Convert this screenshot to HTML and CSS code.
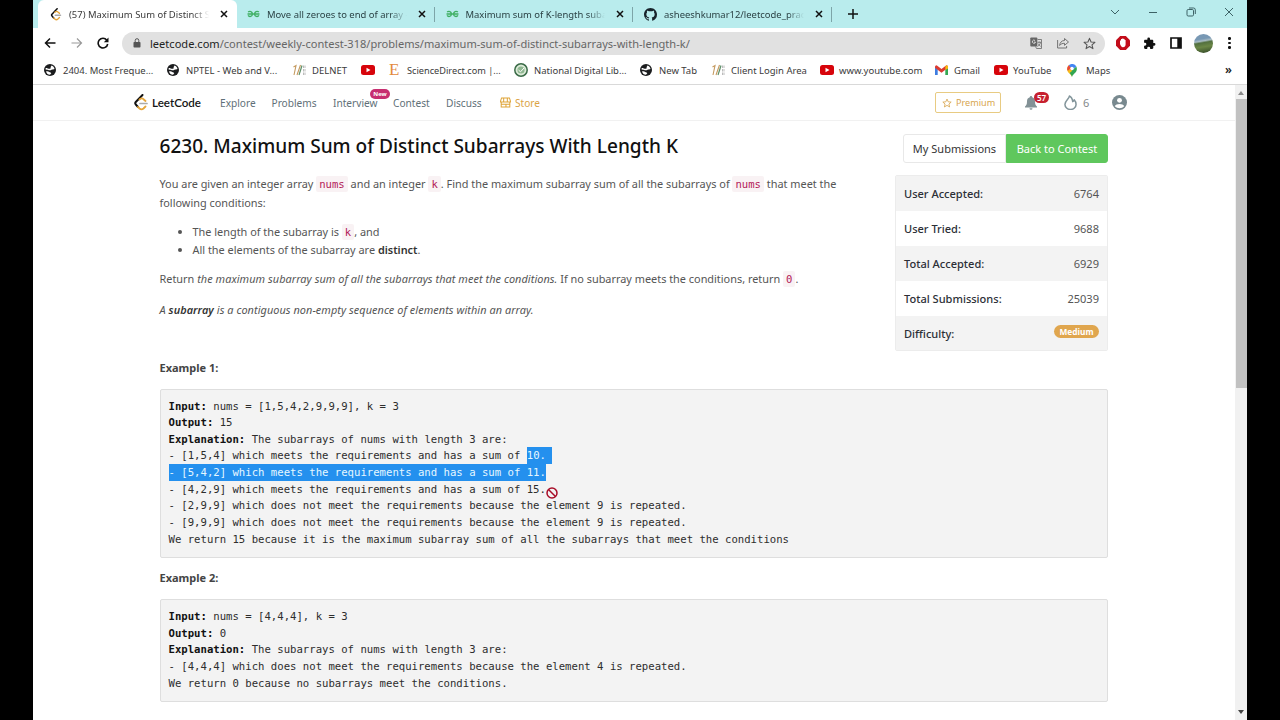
FILE: index.html
```html
<!DOCTYPE html>
<html lang="en">
<head>
<meta charset="utf-8">
<title>Maximum Sum of Distinct Subarrays With Length K</title>
<link rel="stylesheet" href="styles.css">
</head>
<body>
<svg class="defs" width="0" height="0">
  <symbol id="globe" viewBox="0 0 24 24"><circle cx="12" cy="12" r="12" fill="#1b1c1e"/><path d="M3.500 8c3 0 5 1.500 8 1.500 2 0 2.500-1.500 1.500-3l2-3.500c3 1 5.500 3.500 6 7-2 1.500-4 0-6 1.500-1.500 1-4 1.500-6.500.5C6 11 4.500 11.500 3 11z" fill="#fff"/><path d="M4 15c3-1 5 0 6.500 1s3.500.5 4 2.500L12 21.500C8 21.500 5 19 4 15z" fill="#fff"/></symbol>
  <symbol id="delnet" viewBox="0 0 26 24"><path d="M1 6l5-3-4 19M8 22L15 2" fill="none" stroke="#c59a5f" stroke-width="2.200"/><path d="M12 22l6-19" fill="none" stroke="#5d8f69" stroke-width="2.400"/><path d="M21 3v5M21 10v5M21 17v5M24 3v5M24 10v5M24 17v5" stroke="#aaa" stroke-width="1.600"/></symbol>
  <symbol id="yt" viewBox="0 0 28 20"><rect width="28" height="20" rx="5" fill="#d7040b"/><path d="M11 5.500v9l8-4.500z" fill="#fff"/></symbol>
  <symbol id="gfg" viewBox="0 0 24 14"><path d="M2 3.500C5 1 10 2 10 7s-6 6-8 2.500M1 7h22M22 3.500C19 1 14 2 14 7s6 6 8 2.500" fill="none" stroke="#3faf63" stroke-width="2.400"/></symbol>
  <symbol id="lc" viewBox="0 0 28 34"><path d="M17 2L4 15.500q-3 3 0 6l4 4.500" fill="none" stroke="#111" stroke-width="4" stroke-linecap="round"/><path d="M8 26l3 3q4 3.500 8 0l4-4M11 11q5-4 8-.5l4 3.500" fill="none" stroke="#e5a53a" stroke-width="3.600" stroke-linecap="round"/><path d="M12 19h14" stroke="#aaa" stroke-width="3.400" stroke-linecap="round"/></symbol>
  <symbol id="x" viewBox="0 0 8 8"><path d="M1 1l6 6M7 1L1 7" stroke="#111" stroke-width="1.500"/></symbol>
  <symbol id="star" viewBox="0 0 24 24"><path d="M12 2.500l2.900 6.700 7.100.6-5.400 4.700 1.700 7L12 17.700 5.700 21.500l1.700-7L2 9.800l7.100-.6z" fill="none" stroke="currentColor" stroke-width="2" stroke-linejoin="round"/></symbol>
</svg>
<div class="window">
  <div class="tabs">
    <div class="tab active"><svg class="fav lcfav"><use href="#lc"/></svg><span class="tab-title">(57) Maximum Sum of Distinct Su</span><svg class="close"><use href="#x"/></svg></div>
    <div class="tab"><svg class="fav"><use href="#gfg"/></svg><span class="tab-title">Move all zeroes to end of array - G</span><svg class="close"><use href="#x"/></svg></div>
    <div class="tab"><svg class="fav"><use href="#gfg"/></svg><span class="tab-title">Maximum sum of K-length subarray</span><svg class="close"><use href="#x"/></svg></div>
    <div class="tab"><svg class="fav gh" viewBox="0 0 16 16"><path fill="#17232b" d="M8 0C3.580 0 0 3.580 0 8c0 3.540 2.290 6.530 5.470 7.590.4.070.55-.17.55-.38 0-.19-.01-.82-.01-1.490-2.010.37-2.530-.49-2.690-.94-.09-.23-.48-.94-.82-1.130-.28-.15-.68-.52-.01-.53.63-.01 1.080.58 1.230.82.72 1.210 1.870.87 2.330.66.07-.52.28-.87.51-1.070-1.780-.2-3.640-.89-3.640-3.950 0-.87.31-1.590.82-2.150-.08-.2-.36-1.020.08-2.120 0 0 .67-.21 2.200.82.64-.18 1.320-.27 2-.27s1.360.09 2 .27c1.530-1.040 2.200-.82 2.200-.82.44 1.100.16 1.920.08 2.120.51.56.82 1.270.82 2.150 0 3.070-1.870 3.750-3.650 3.950.29.25.54.73.54 1.480 0 1.070-.01 1.930-.01 2.200 0 .21.15.46.55.38A8 8 0 0 0 16 8c0-4.420-3.580-8-8-8z"/></svg><span class="tab-title">asheeshkumar12/leetcode_practice</span><svg class="close"><use href="#x"/></svg></div>
    <svg class="newtab" viewBox="0 0 10 10"><path d="M5 0v10M0 5h10" stroke="#111" stroke-width="1.500"/></svg>
    <div class="controls">
      <svg width="10" height="10" viewBox="0 0 10 10"><path d="M1 3l4 4 4-4"/></svg>
      <svg width="10" height="10" viewBox="0 0 10 10"><path d="M1 5.500h8"/></svg>
      <svg width="10" height="10" viewBox="0 0 10 10"><rect x="1" y="2.500" width="6.500" height="6.500" rx="1.200"/><path d="M3 1h4.500Q9.300 1 9.300 2.800V7"/></svg>
      <svg width="10" height="10" viewBox="0 0 10 10"><path d="M1 1l8 8M9 1L1 9"/></svg>
    </div>
  </div>

  <div class="toolbar">
    <svg class="tb back" viewBox="0 0 12 12"><path d="M11.500 6H1.500M6 1.500L1.500 6 6 10.500" fill="none" stroke="#111" stroke-width="1.500"/></svg>
    <svg class="tb fwd" viewBox="0 0 12 12"><path d="M.5 6h10M6 1.500L10.500 6 6 10.500" fill="none" stroke="#999" stroke-width="1.200"/></svg>
    <svg class="tb reload" viewBox="0 0 12 12"><path d="M9.800 3.200A4.800 4.800 0 1 0 10.700 7" fill="none" stroke="#111" stroke-width="1.600"/><path d="M11.500.5v4.700H6.800z" fill="#111"/></svg>
    <div class="omnibox">
      <svg class="lock" viewBox="0 0 8 10"><rect x=".5" y="4" width="7" height="5.500" rx=".8" fill="#555"/><path d="M2.200 4V2.500a1.800 1.800 0 0 1 3.600 0V4" fill="none" stroke="#555"/></svg>
      <span class="url"><b>leetcode.com</b>/contest/weekly-contest-318/problems/maximum-sum-of-distinct-subarrays-with-length-k/</span>
      <svg class="om" viewBox="0 0 12 12"><rect x=".3" y=".5" width="7" height="9" rx=".8" fill="#666"/><path d="M5 3.500a1.600 1.600 0 1 0 .5 1.600H4" fill="none" stroke="#e1e1e1" stroke-width=".9"/><path d="M7.500 2.500h4v9H6.500l-1-2M7.500 5.300h3.500M9.200 4.500v.8M10.500 5.500c-.5 2-1.500 3-3 4M8 6.500l2.500 3" fill="none" stroke="#666" stroke-width=".8"/></svg>
      <svg class="om" viewBox="0 0 12 12"><path d="M.6 3v8h9V9M7.500 1.500v2C4.500 3.600 3 5.500 2.600 8.500 4 6.800 5.500 6.300 7.500 6.300v2L11.500 5z" fill="none" stroke="#666" stroke-width=".9" stroke-linejoin="round"/></svg>
      <svg class="om st"><use href="#star"/></svg>
    </div>
    <svg class="ext adb" viewBox="0 0 14 14"><path d="M4.200 0h5.600L14 4.200v5.600L9.800 14H4.200L0 9.800V4.200z" fill="#c30d1b"/><path d="M4 7V4.500h1V3h1.200v-.5h1.200V3h1.200v1h1v4.500c0 1.500-1 2.700-2.700 2.700C5.500 11.200 4.700 9.500 4 8z" fill="#fff"/></svg>
    <svg class="ext puz" viewBox="0 0 24 24"><path fill="#111" d="M20.500 11H19V7c0-1.100-.9-2-2-2h-4V3.500a2.500 2.500 0 0 0-5 0V5H4c-1.100 0-2 .9-2 2v3.800h1.500a2.700 2.700 0 0 1 0 5.400H2V20c0 1.100.9 2 2 2h3.800v-1.500a2.700 2.700 0 0 1 5.400 0V22H17c1.100 0 2-.9 2-2v-4h1.500a2.500 2.500 0 0 0 0-5z"/></svg>
    <svg class="ext side" viewBox="0 0 12 12"><path d="M1 1h10v10H1z" fill="none" stroke="#111" stroke-width="1.700"/><path d="M7.300 1H11v10H7.300z" fill="#111"/></svg>
    <div class="avatar"></div>
    <div class="dots"><i></i><i></i><i></i></div>
  </div>

  <div class="bookmarks">
    <div class="bm b1"><svg><use href="#globe"/></svg>2404. Most Freque...</div>
    <div class="bm b2"><svg><use href="#globe"/></svg>NPTEL - Web and V...</div>
    <div class="bm b3"><svg class="dn"><use href="#delnet"/></svg>DELNET</div>
    <div class="bm b4"><svg class="ytb"><use href="#yt"/></svg></div>
    <div class="bm b5"><span class="els">E</span>ScienceDirect.com |...</div>
    <div class="bm b6"><svg class="ndl" viewBox="0 0 14 14"><circle cx="7" cy="7" r="6.200" fill="#dcebd8" stroke="#3a6b47" stroke-width="1.500"/><circle cx="7" cy="7" r="3.600" fill="#8fb791"/><path d="M4.500 7l2 1.800L10 5" fill="none" stroke="#fff"/></svg>National Digital Lib...</div>
    <div class="bm b7"><svg><use href="#globe"/></svg>New Tab</div>
    <div class="bm b8"><svg class="dn"><use href="#delnet"/></svg>Client Login Area</div>
    <div class="bm b9"><svg class="ytb"><use href="#yt"/></svg>www.youtube.com</div>
    <div class="bm b10"><svg class="gm" viewBox="0 0 24 18"><path d="M0 3v15h5V7z" fill="#3f7de0"/><path d="M24 3v15h-5V7z" fill="#34a853"/><path d="M0 3q0-3 3-3l9 7 9-7q3 0 3 3v2L12 14 0 5z" fill="#dc3a30"/><path d="M19 2.500L21.500 0Q24 .5 24 3v3l-5 3z" fill="#f6b90d"/></svg>Gmail</div>
    <div class="bm b11"><svg class="ytb"><use href="#yt"/></svg>YouTube</div>
    <div class="bm b12"><svg class="mp" viewBox="0 0 18 24"><path d="M9 24C8 18 0 16 0 9a9 9 0 0 1 3-6.700L9 9z" fill="#f7bd1b"/><path d="M9 24c1-6 9-8 9-15 0-1.500-.4-3-1-4.300L4 16c3 3 4.500 5 5 8z" fill="#32a652"/><path d="M3 2.300A9 9 0 0 1 17 4.700L9 11z" fill="#4285f4"/><path d="M3 2.300L9 9l-6 5C1 12 0 11 0 9a9 9 0 0 1 3-6.700z" fill="#e9483a"/><path d="M1 13l4-4 4 4-5 4z" fill="#f7bd1b"/><circle cx="9" cy="8.500" r="3.200" fill="#fff"/></svg>Maps</div>
    <span class="more">»</span>
  </div>

  <div class="view">
    <div class="page">
      <nav class="nav">
        <svg class="logo"><use href="#lc"/></svg><span class="brand">LeetCode</span>
        <a class="n1">Explore</a><a class="n2">Problems</a><a class="n3">Interview<em>New</em></a><a class="n4">Contest</a><a class="n5">Discuss</a>
        <a class="store"><svg viewBox="0 0 12 12"><path d="M1.700 1h8.600l1.100 3.500v1H.6v-1zM1.300 5.500V11h9.400V5.500M1.300 8h9.400M6.500 8v3M4 1v4M8 1v4" fill="none" stroke="#dfa437" stroke-width="1.100"/></svg>Store</a>
        <div class="premium"><svg><use href="#star"/></svg>Premium</div>
        <div class="bell"><svg viewBox="0 0 12 14"><path d="M6 0c.8 0 1.200.6 1.200 1.300C9.300 1.900 10 3.500 10 5.500c0 3 .8 4 2 5v1H0v-1c1.200-1 2-2 2-5 0-2 .7-3.600 2.800-4.200C4.800.6 5.200 0 6 0zM4.500 12.300h3a1.500 1.500 0 0 1-3 0z" fill="#829196"/></svg><em>57</em></div>
        <svg class="flame" viewBox="0 0 14 16"><path d="M5.800 1C6 4 1 6 1 10.200a6 5.300 0 0 0 12 0C13 7.500 12 6 11 5c-.3 1-.8 1.700-1.600 2.100C9 4 8 2 5.800 1z" fill="none" stroke="#82949a" stroke-width="1.600" stroke-linejoin="round"/></svg><span class="streak">6</span>
        <svg class="user" viewBox="0 0 16 16"><circle cx="8" cy="8" r="8" fill="#78898f"/><circle cx="8" cy="5.700" r="2.600" fill="#fff"/><path d="M3 12c1-3.200 9-3.200 10 0-2.500 2.700-7.500 2.700-10 0z" fill="#fff"/></svg>
      </nav>
      <main>
        <div class="top">
          <section class="question">
            <h1>6230. Maximum Sum of Distinct Subarrays With Length K</h1>
            <p>You are given an integer array <code>nums</code> and an integer <code>k</code>. Find the maximum subarray sum of all the subarrays of <code>nums</code> that meet the following conditions:</p>
            <ul>
              <li>The length of the subarray is <code>k</code>, and</li>
              <li>All the elements of the subarray are <strong>distinct</strong>.</li>
            </ul>
            <p class="ret">Return <i>the maximum subarray sum of all the subarrays that meet the conditions.</i> If no subarray meets the conditions, return <code>0</code>.</p>
            <p class="def"><i>A <strong>subarray</strong> is a contiguous non-empty sequence of elements within an array.</i></p>
          </section>
          <aside>
            <div class="buttons"><span class="btn">My Submissions</span><span class="btn green">Back to Contest</span></div>
            <div class="stats">
              <div><b>User Accepted:</b><span>6764</span></div>
              <div><b>User Tried:</b><span>9688</span></div>
              <div><b>Total Accepted:</b><span>6929</span></div>
              <div><b>Total Submissions:</b><span>25039</span></div>
              <div><b>Difficulty:</b><span class="medium">Medium</span></div>
            </div>
          </aside>
        </div>
        <h2>Example 1:</h2>
<pre><b>Input:</b> nums = [1,5,4,2,9,9,9], k = 3
<b>Output:</b> 15
<b>Explanation:</b> The subarrays of nums with length 3 are:
- [1,5,4] which meets the requirements and has a sum of <mark class="eol">10.</mark>
<mark>- [5,4,2] which meets the requirements and has a sum of 11.</mark>
- [4,2,9] which meets the requirements and has a sum of 15.<svg class="cursor" viewBox="0 0 12 12"><circle cx="6" cy="6" r="5" fill="none" stroke="#a80d28" stroke-width="1.500"/><path d="M2.500 2.500l7 7" stroke="#a80d28" stroke-width="1.500"/></svg>
- [2,9,9] which does not meet the requirements because the element 9 is repeated.
- [9,9,9] which does not meet the requirements because the element 9 is repeated.
We return 15 because it is the maximum subarray sum of all the subarrays that meet the conditions
</pre>
        <h2 class="second">Example 2:</h2>
<pre><b>Input:</b> nums = [4,4,4], k = 3
<b>Output:</b> 0
<b>Explanation:</b> The subarrays of nums with length 3 are:
- [4,4,4] which does not meet the requirements because the element 4 is repeated.
We return 0 because no subarrays meet the conditions.
</pre>
      </main>
    </div>
    <div class="scroll"><svg viewBox="0 0 6 4"><path d="M0 4l3-4 3 4z" fill="#8a8a8a"/></svg><div class="thumb"></div><svg class="down" viewBox="0 0 6 4"><path d="M0 0l3 4 3-4z" fill="#444"/></svg></div>
  </div>
</div>
</body>
</html>
```
FILE: styles.css
```css
* { box-sizing: border-box; }
body { margin: 0; background: #000; font-family: "Noto Sans", "Open Sans", sans-serif; height: 720px; overflow: hidden; }
svg { display: block; flex: none; }
.defs { position: absolute; }
.window { width: 1214px; height: 720px; margin-left: 33px; background: #fff; display: flex; flex-direction: column; }

.tabs { height: 28px; background: #b9eced; display: flex; padding-left: 5px; flex: none; }
.tab { width: 198.500px; height: 28px; padding: 0 9px 0 12px; display: flex; align-items: center; font-size: 9.450px; color: #2b4245; position: relative; }
.tab.active { background: #fff; border-radius: 6px 6px 0 0; width: 199px; color: #3a3a3a; }
.tab:not(.active)::after { content: ""; position: absolute; right: 1px; top: 7px; width: 1px; height: 15px; background: #7da5a8; }
.tab:not(.active) { padding-left: 10px; }
.fav { width: 13px; height: 8px; margin-right: 7px; }
.fav.lcfav { width: 12px; height: 13px; }
.fav.gh { width: 13px; height: 13px; }
.tab-title { flex: 1; overflow: hidden; white-space: nowrap; margin-right: 11px; -webkit-mask-image: linear-gradient(90deg, #000 88%, transparent); mask-image: linear-gradient(90deg, #000 88%, transparent); }
.close { width: 8px; height: 8px; }
.tab:not(.active) .close { margin-right: 1px; }
.newtab { width: 10px; height: 10px; margin: 9px 0 0 15px; }
.controls { margin-left: auto; display: flex; gap: 28px; padding: 7px 13px 0 0; }
.controls svg { fill: none; stroke: #3d6266; stroke-width: 1; }

.toolbar { height: 30px; display: flex; align-items: center; padding-left: 11px; flex: none; }
.tb { width: 12px; height: 12px; }
.fwd { margin-left: 15px; }
.reload { margin-left: 14px; }
.omnibox { margin-left: 13px; width: 983px; height: 23px; background: #e1e1e1; border-radius: 12px; display: flex; align-items: center; padding: 0 9px 0 11px; }
.lock { width: 8px; height: 10px; margin-right: 9px; }
.url { font-size: 11.070px; color: #666; flex: 1; white-space: nowrap; }
.url b { font-weight: 400; color: #222; }
.om { width: 12px; height: 12px; margin-left: 15px; }
.om.st { width: 13px; height: 13px; color: #555; margin-left: 14px; }
.adb { width: 14px; height: 14px; margin-left: 11px; }
.puz { width: 13px; height: 13px; margin-left: 13px; }
.side { width: 12px; height: 12px; margin-left: 14px; }
.avatar { width: 19px; height: 19px; border-radius: 50%; margin-left: 12px; background: linear-gradient(170deg, #7898b4 0 28%, #a9bcc4 38%, #53703f 46%, #6b8746 65%, #2f4526); }
.dots { margin-left: 15px; display: flex; flex-direction: column; gap: 2px; }
.dots i { width: 2.500px; height: 2.500px; border-radius: 50%; background: #111; }

.bookmarks { height: 27px; border-bottom: 1px solid #d9d9d9; display: flex; align-items: center; padding-left: 11px; font-size: 9.500px; color: #3a3a3a; flex: none; padding-bottom: 2px; }
.bm { display: flex; align-items: center; white-space: nowrap; flex: none; }
.bm svg { width: 12px; height: 12px; margin-right: 7px; }
.bm .dn { width: 13px; height: 12px; margin-right: 6px; }
.bm .ytb { width: 14px; height: 10px; margin-right: 5px; }
.bm .ndl { width: 14px; height: 14px; margin-right: 6px; }
.bm .gm { width: 13px; height: 10px; margin-right: 6px; }
.bm .mp { width: 10px; height: 13px; margin-right: 9px; }
.els { font: 17px/14px "Liberation Serif", serif; color: #e28a3c; width: 18px; }
.b1 { width: 123px; } .b2 { width: 126px; } .b3 { width: 68px; } .b4 { width: 28px; }
.b5 { width: 125px; font-size: 9.200px; } .b6 { width: 126px; } .b7 { width: 72px; } .b8 { width: 108px; }
.b9 { width: 115px; } .b10 { width: 59px; } .b11 { width: 73px; }
.more { margin: -2px 15px 0 auto; font-size: 12px; font-weight: 600; color: #222; }

.view { flex: 1; display: flex; min-height: 0; }
.page { flex: 1; overflow: hidden; }
.scroll { width: 12px; background: #f1f1f1; display: flex; flex-direction: column; align-items: center; padding: 6px 0; }
.scroll svg { width: 6px; height: 4px; }
.thumb { width: 11px; height: 289px; background: #c1c1c1; margin-top: 4px; }
.scroll .down { margin-top: auto; }

.nav { height: 36px; border-bottom: 1px solid #f1f1f1; display: flex; align-items: center; padding-left: 101px; font-size: 10.150px; color: #5f7078; }
.logo { width: 14px; height: 17px; margin-right: 4px; }
.brand { font: 600 11.600px "Lato", "Noto Sans", sans-serif; color: #151515; width: 68px; }
.nav a { position: relative; }
.n1 { width: 51.500px; } .n2 { width: 61.500px; } .n3 { width: 60px; } .n4 { width: 53px; } .n5 { width: 54px; }
.n3 em { position: absolute; left: 37px; top: -7px; width: 20px; height: 10px; border-radius: 5px; background: #c72e70; color: #fff; font: 700 6px/10px "Noto Sans", sans-serif; text-align: center; }
.store { display: flex; align-items: center; color: #dba447; width: 435px; }
.store svg { width: 11px; height: 11px; margin-right: 4px; }
.premium { width: 66px; height: 21px; border: 1px solid #e8cb82; border-radius: 2px; display: flex; align-items: center; color: #d8a64f; font-size: 9.100px; padding-left: 6px; }
.premium svg { width: 10px; height: 10px; margin-right: 4px; }
.bell { position: relative; margin-left: 24px; }
.bell svg { width: 12px; height: 14px; }
.bell em { position: absolute; left: 9px; top: -4px; width: 15px; height: 11px; border-radius: 6px; background: #c6202f; color: #fff; font: 600 8px/11px "Noto Sans", sans-serif; text-align: center; }
.flame { width: 13px; height: 15px; margin-left: 27px; }
.streak { margin-left: 6px; width: 28px; font-size: 11px; color: #84888b; }
.user { width: 15px; height: 15px; margin-left: 1px; }

main { padding: 13px 0 0 126.500px; width: 1075px; color: #555; }
.top { display: flex; justify-content: space-between; height: 219px; }
.question { width: 690px; font-size: 10.900px; line-height: 18.500px; }
h1 { margin: 0 0 16px; font-size: 19.070px; line-height: 25px; font-weight: 500; color: #111; white-space: nowrap; }
p { margin: 0 0 10.500px; }
ul { margin: 0 0 10.500px; padding-left: 33px; }
li::marker { font-size: 12px; }
p.ret, p.def { margin-bottom: 12px; }
i { letter-spacing: .06px; }
strong { color: #333; font-weight: 600; }
code { font: 10.600px "DejaVu Sans Mono", monospace; color: #b32058; background: #f9f2f4; border-radius: 2px; padding: 2px 3px; }
aside { width: 213px; }
.buttons { display: flex; margin: 0 0 12px 8px; height: 29px; font-size: 11px; line-height: 27px; }
.btn { width: 103px; border: 1px solid #e8e8e8; border-radius: 3px 0 0 3px; text-align: center; color: #333; }
.btn.green { flex: 1; background: #5fc75d; border-color: #5fc75d; color: #fff; border-radius: 0 3px 3px 0; }
.stats { border: 1px solid #ececec; border-radius: 2px; font-size: 11.050px; }
.stats div { height: 34.900px; display: flex; align-items: center; justify-content: space-between; padding: 1px 8px; }
.stats div:nth-child(odd) { background: #f3f3f3; }
.stats b { font-weight: 500; color: #2c2f36; }
.stats span { color: #555; }
.stats .medium { background: #e0a64e; color: #fff; font-size: 8.300px; line-height: 13px; font-weight: 700; border-radius: 7px; padding: 0 5.500px; margin-top: -3px; }

h2 { margin: 6px 0 12px; font-size: 11px; line-height: 18px; font-weight: 700; color: #444; }
h2.second { margin: 11.500px 0 12px; }
pre { margin: 0; width: 948px; background: #f3f3f3; border: 1px solid #dedede; border-radius: 2px; padding: 8.500px 8px; font: 10.640px/16.650px "DejaVu Sans Mono", "Liberation Mono", monospace; color: #2d2d2d; }
pre b { color: #111; }
mark { background: #2490ee; color: #e6f7ff; padding: 2px 0; }
mark.eol { padding-right: 6px; }
.cursor { display: inline-block; width: 12px; height: 12px; vertical-align: -2px; margin: -4px 0; }
```
